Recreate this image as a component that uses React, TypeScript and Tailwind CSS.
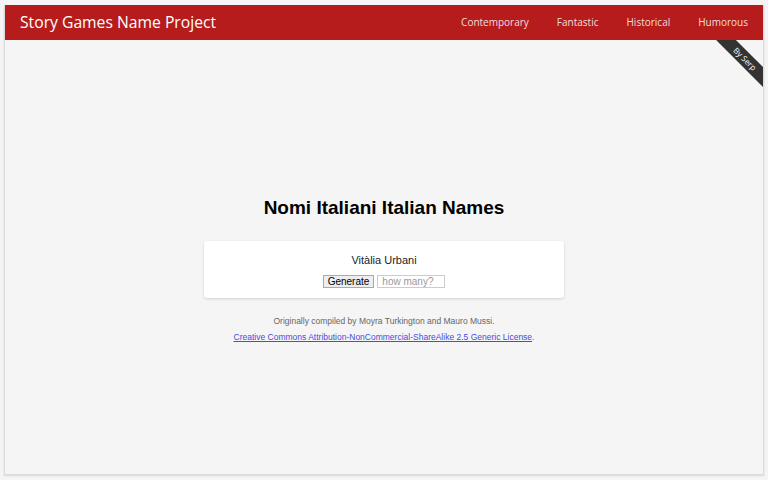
import React from 'react';

const navItems = ['Contemporary', 'Fantastic', 'Historical', 'Humorous'];

export default function App() {
  return (
    <div className="min-h-[480px] w-[768px] bg-[#f5f5f5] px-[4px] pt-[5px] pb-[5px]" style={{ fontFamily: '"Liberation Sans", Arial, sans-serif' }}>
      <div className="relative flex h-[470px] flex-col overflow-hidden border-x border-b border-[#dcdcdc] bg-[#f5f5f5] shadow-[0_1px_2px_rgba(0,0,0,0.12)]">
        {/* Navbar */}
        <div className="flex h-[35px] shrink-0 items-center bg-[#b71c1c] pl-[15px] pr-[15px]" style={{ fontFamily: '"Open Sans", sans-serif' }}>
          <span className="text-[15.7px] text-white">Story Games Name Project</span>
          <div className="ml-auto flex items-center gap-[28px] text-[10px] text-[#f3dede]">
            {navItems.map((n) => (
              <span key={n}>{n}</span>
            ))}
          </div>
        </div>

        {/* Ribbon */}
        <div className="pointer-events-none absolute right-0 top-[35px] h-[54px] w-[50px] overflow-hidden">
          <div
            className="absolute right-[-32px] top-[12px] w-[100px] rotate-45 bg-[#333] py-[2px] text-center text-[8px] leading-[10px] text-white"
            style={{ fontFamily: '"Open Sans", sans-serif' }}
          >
            By Serp
          </div>
        </div>

        {/* Content */}
        <div className="flex flex-col items-center pt-[157px]">
          <h1 className="text-[19px] font-bold leading-[22px] text-black">Nomi Italiani Italian Names</h1>
          <div className="mt-[22px] flex w-[360px] flex-col items-center rounded-[3px] bg-white pt-[12px] pb-[10px] shadow-[0_1px_3px_rgba(0,0,0,0.15)]">
            <div className="text-[11px] leading-[14px] text-[#222]">Vitàlia Urbani</div>
            <div className="mt-[8px] flex items-center gap-[3px]">
              <button className="h-[13px] border border-[#aaa] bg-[#eee] px-[4px] text-[10px] leading-[11px] text-black">Generate</button>
              <input
                className="h-[13px] w-[68px] border border-[#ccc] bg-white px-[4px] text-[10px] leading-[11px] text-black placeholder:text-[#999] outline-none"
                placeholder="how many?"
              />
            </div>
          </div>
          <p className="mt-[17px] text-[8.5px] leading-[12px] text-[#666]">Originally compiled by Moyra Turkington and Mauro Mussi.</p>
          <p className="mt-[4px] text-[8.5px] leading-[12px] text-[#666]">
            <a className="text-[#4a4ae0] underline">Creative Commons Attribution-NonCommercial-ShareAlike 2.5 Generic License</a>.
          </p>
        </div>
      </div>
    </div>
  );
}
